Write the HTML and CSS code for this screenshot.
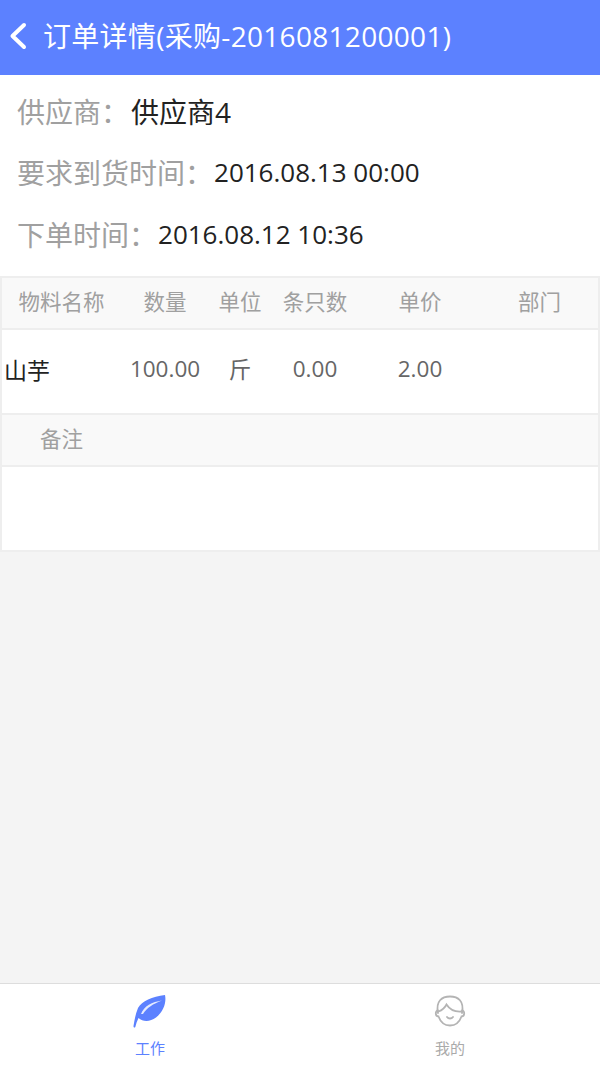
FILE: index.html
```html
<!DOCTYPE html>
<html lang="zh-CN">
<head>
<meta charset="utf-8">
<title>订单详情</title>
<link rel="stylesheet" href="styles.css">
</head>
<body>
<div class="app">
  <header class="topbar">
    <svg class="back" viewBox="0 0 20 28" width="20" height="28"><path d="M16 3 L4.500 14 L16 25" fill="none" stroke="#fff" stroke-width="4" stroke-linecap="round" stroke-linejoin="round"/></svg>
    <h1 class="title">订单详情(采购-2016081200001)</h1>
  </header>
  <section class="info">
    <div class="info-row"><span class="label">供应商：</span><span class="value">供应商4</span></div>
    <div class="info-row"><span class="label">要求到货时间：</span><span class="value date">2016.08.13 00:00</span></div>
    <div class="info-row"><span class="label">下单时间：</span><span class="value date">2016.08.12 10:36</span></div>
  </section>
  <section class="sheet">
    <div class="row head">
      <span>物料名称</span><span>数量</span><span>单位</span><span>条只数</span><span>单价</span><span>部门</span>
    </div>
    <div class="row body">
      <span class="name">山芋</span><span>100.00</span><span>斤</span><span>0.00</span><span>2.00</span><span></span>
    </div>
    <div class="row head">
      <span>备注</span>
    </div>
    <div class="row body"></div>
  </section>
  <main class="filler"></main>
  <nav class="tabbar">
    <div class="tab active">
      <svg class="tab-icon" viewBox="0 0 36 36" width="36" height="36">
        <path d="M1.500 33 C2.500 27 3.500 21 6 15 C10 8 20 3.500 33 2 C34.500 9 32 18 24 24.500 C18 29 11 29 6.500 25 C5 28 4 31 3.300 34 C2.800 35 1.300 34.500 1.500 33 Z" fill="#5c81ff"/>
        <path d="M9 21 C12 13 20 9 30 7.500 C21 11 15 14.500 11 21 Z" fill="#e4eaff"/>
      </svg>
      <span class="tab-label">工作</span>
    </div>
    <div class="tab">
      <svg class="tab-icon" viewBox="0 0 36 36" width="36" height="36">
        <g fill="none" stroke="#b4b4b4" stroke-width="1.800" stroke-linecap="round">
          <path d="M6 20 C3.500 8 10 3.500 18 3.500 C26 3.500 32.500 8 30 20"/>
          <path d="M6 17.500 C3 17.500 3 23.500 6.500 23.500 C8.500 29 13 32.500 18 32.500 C23 32.500 27.500 29 29.500 23.500 C33 23.500 33 17.500 30 17.500"/>
          <path d="M6.500 18.500 C10.500 17 13 14.500 14.500 11.500 C18 17 23.500 19 29.500 18.500"/>
          <path d="M15 24 C16.500 26 19.500 26 21 24"/>
        </g>
      </svg>
      <span class="tab-label">我的</span>
    </div>
  </nav>
</div>
</body>
</html>
```
FILE: styles.css
```css
* { box-sizing: border-box; }

html, body {
  margin: 0;
  height: 100%;
}

body {
  font-family: "Open Sans", "Noto Sans CJK SC", sans-serif;
  background: #f4f4f4;
}

.app {
  display: flex;
  flex-direction: column;
  height: 1067px;
}

.topbar {
  display: flex;
  align-items: center;
  gap: 15px;
  height: 75px;
  padding: 0 0 6px 8px;
  background: #5c81ff;
  color: #fff;
}

.back {
  margin-top: 2px;
}

.title {
  margin: 0;
  font-size: 28px;
  font-weight: 400;
  letter-spacing: 0.3px;
  white-space: nowrap;
}

.info {
  display: flex;
  flex-direction: column;
  height: 201px;
  padding: 5px 17px 0;
  background: #fff;
}

.info-row {
  display: flex;
  align-items: center;
  gap: 2px;
  height: 61.500px;
  font-size: 28px;
  white-space: nowrap;
}

.label { color: #a0a0a0; }
.value { color: #222; }
.date { font-size: 26px; margin-left: -1px; }

.sheet {
  background: #fff;
}

.row {
  display: grid;
  grid-template-columns: 119px 88px 62px 88px 122px 117px;
  align-items: center;
  text-align: center;
  border: 2px solid #eee;
  border-bottom: 0;
}

.row:last-child {
  border-bottom: 2px solid #eee;
}

.head {
  height: 52px;
  padding-bottom: 6px;
  background: #f9f9f9;
  color: #a0a0a0;
  font-size: 21.500px;
}

.body {
  height: 85px;
  padding-bottom: 6px;
  font-size: 22.500px;
  color: #666;
}

.row:last-child.body {
  height: 87px;
}

.name {
  justify-self: start;
  padding-left: 2px;
  font-size: 23px;
  color: #222;
}

.filler {
  flex: 1;
}

.tabbar {
  display: flex;
  height: 84px;
  background: #fff;
  border-top: 1px solid #ddd;
}

.tab {
  flex: 1;
  display: flex;
  flex-direction: column;
  align-items: center;
  color: #aaa;
  padding-top: 9px;
}

.tab.active {
  color: #5c81ff;
}

.tab-icon {
  display: block;
}

.tab-label {
  margin-top: 9px;
  font-size: 15px;
  line-height: 20px;
}
```
